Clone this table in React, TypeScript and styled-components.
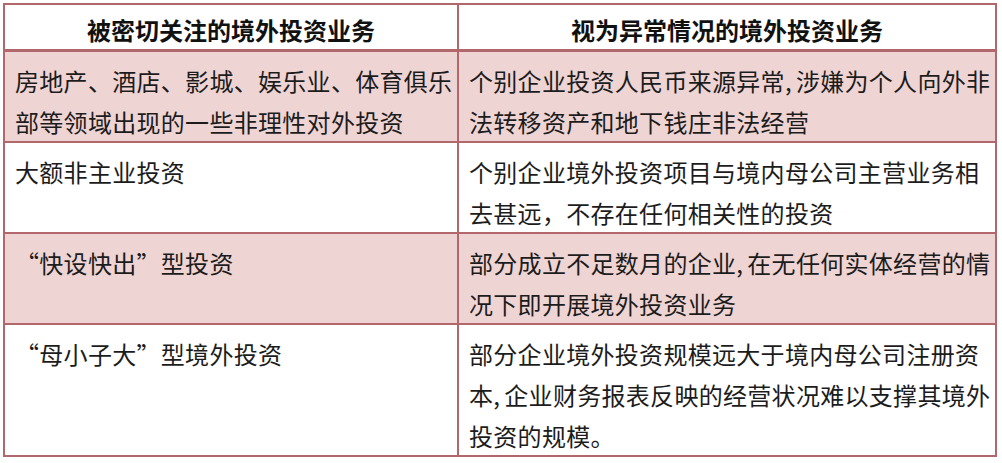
import React from "react";
import styled, { createGlobalStyle } from "styled-components";

const Global = createGlobalStyle`
  html, body { margin: 0; padding: 0; background: #ffffff; }
  body { font-family: "Noto Sans CJK SC", "Microsoft YaHei", sans-serif; color: #1c1c1c; }
`;

const Page = styled.div`
  padding: 3px 0 0 3px;
  width: 1002px;
  height: 463px;
  box-sizing: border-box;
`;

const Table = styled.div`
  display: grid;
  grid-template-columns: 454px 536px;
  width: 994px;
  box-sizing: border-box;
  border: 2px solid #b1676b;
`;

const HeadCell = styled.div<{ $last?: boolean }>`
  background: #ffffff;
  border-bottom: 3px solid #b1676b;
  border-right: ${(p) => (p.$last ? "none" : "2px solid #b1676b")};
  padding-top: 6px;
  line-height: 38px;
  font-size: 24px;
  font-weight: 700;
  text-align: center;
  color: #111;
`;

const Cell = styled.div<{ $pink?: boolean; $last?: boolean; $bottom?: boolean }>`
  background: ${(p) => (p.$pink ? "#efd4d4" : "#ffffff")};
  border-right: ${(p) => (p.$last ? "none" : "2px solid #b1676b")};
  border-bottom: ${(p) => (p.$bottom ? "none" : "2px solid #b1676b")};
  padding: 8px 0 0 10px;
  line-height: 41px;
  height: ${(p) => (p.$bottom ? "122px" : "81px")};
  font-size: 24px;
  letter-spacing: 0.3px;
  white-space: nowrap;
  color: #1c1c1c;
`;

const Comma = styled.span`
  margin-right: 4px;
`;

const Line = styled.div``;

const renderLine = (s: string) => {
  const parts = s.split(",");
  return parts.map((p, i) => (
    <React.Fragment key={i}>
      {p}
      {i < parts.length - 1 && <Comma>,</Comma>}
    </React.Fragment>
  ));
};

const rows: { left: string[]; right: string[]; pink: boolean }[] = [
  {
    pink: true,
    left: ["房地产、酒店、影城、娱乐业、体育俱乐", "部等领域出现的一些非理性对外投资"],
    right: ["个别企业投资人民币来源异常,涉嫌为个人向外非", "法转移资产和地下钱庄非法经营"],
  },
  {
    pink: false,
    left: ["大额非主业投资"],
    right: ["个别企业境外投资项目与境内母公司主营业务相", "去甚远，不存在任何相关性的投资"],
  },
  {
    pink: true,
    left: ["“快设快出”型投资"],
    right: ["部分成立不足数月的企业,在无任何实体经营的情", "况下即开展境外投资业务"],
  },
  {
    pink: false,
    left: ["“母小子大”型境外投资"],
    right: [
      "部分企业境外投资规模远大于境内母公司注册资",
      "本,企业财务报表反映的经营状况难以支撑其境外",
      "投资的规模。",
    ],
  },
];

export default function App() {
  return (
    <>
      <Global />
      <Page>
        <Table>
          <HeadCell>被密切关注的境外投资业务</HeadCell>
          <HeadCell $last>视为异常情况的境外投资业务</HeadCell>
          {rows.map((r, i) => {
            const bottom = i === rows.length - 1;
            return (
              <React.Fragment key={i}>
                <Cell $pink={r.pink} $bottom={bottom}>
                  {r.left.map((l, j) => (
                    <Line key={j}>{renderLine(l)}</Line>
                  ))}
                </Cell>
                <Cell $pink={r.pink} $bottom={bottom} $last>
                  {r.right.map((l, j) => (
                    <Line key={j}>{renderLine(l)}</Line>
                  ))}
                </Cell>
              </React.Fragment>
            );
          })}
        </Table>
      </Page>
    </>
  );
}
